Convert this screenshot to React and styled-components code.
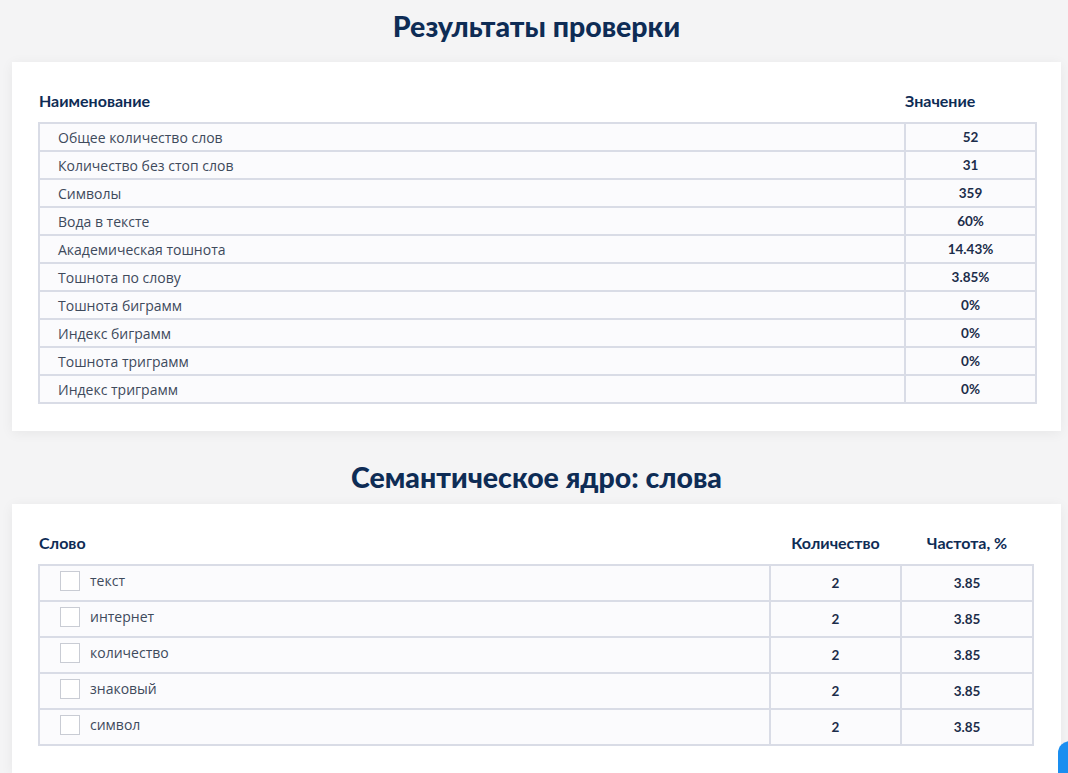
import React from 'react';
import styled, { createGlobalStyle } from 'styled-components';

const Global = createGlobalStyle`
  body { margin: 0; background: #f4f4f5; font-family: 'Open Sans', 'Noto Sans', sans-serif; overflow: hidden; }
`;

const stats = [
  ['Общее количество слов', '52'],
  ['Количество без стоп слов', '31'],
  ['Символы', '359'],
  ['Вода в тексте', '60%'],
  ['Академическая тошнота', '14.43%'],
  ['Тошнота по слову', '3.85%'],
  ['Тошнота биграмм', '0%'],
  ['Индекс биграмм', '0%'],
  ['Тошнота триграмм', '0%'],
  ['Индекс триграмм', '0%'],
];

const words = ['текст', 'интернет', 'количество', 'знаковый', 'символ'];

export default function App() {
  return (
    <Page>
      <Global />
      <Title $bottom={18}>Результаты проверки</Title>
      <Card>
        <Table $w={999}>
          <colgroup><col /><col style={{ width: 131 }} /></colgroup>
          <thead>
            <tr><Th>Наименование</Th><Th>Значение</Th></tr>
          </thead>
          <tbody>
            {stats.map(([n, v]) => (
              <tr key={n}><Td $h={28}>{n}</Td><Num $h={28}>{v}</Num></tr>
            ))}
          </tbody>
        </Table>
      </Card>
      <Title $top={28} $bottom={9}>Семантическое ядро: слова</Title>
      <Card>
        <Table $w={996}>
          <colgroup><col /><col style={{ width: 131 }} /><col style={{ width: 132 }} /></colgroup>
          <thead>
            <tr><Th>Слово</Th><Th $center>Количество</Th><Th $center>Частота, %</Th></tr>
          </thead>
          <tbody>
            {words.map(w => (
              <tr key={w}>
                <Td $h={36}><Word><Box />{w}</Word></Td>
                <Num $h={36}>2</Num>
                <Num $h={36}>3.85</Num>
              </tr>
            ))}
          </tbody>
        </Table>
      </Card>
      <Fab />
    </Page>
  );
}

const Page = styled.div`
  padding: 8px 7px 0 12px;
  position: relative;
  height: 773px;
  box-sizing: border-box;
`;

const Title = styled.h1`
  margin: ${p => p.$top || 0}px 0 ${p => p.$bottom || 0}px;
  text-align: center;
  font-family: Lato, 'Noto Sans', sans-serif;
  font-weight: 900;
  font-size: 28.5px;
  line-height: 36px;
  color: #0e2c55;
`;

const Card = styled.div`
  background: #fff;
  box-shadow: 0 2px 12px rgba(0,0,0,0.06);
  padding: 26px 24px 27px 26px;
`;

const Table = styled.table`
  width: ${p => p.$w}px;
  border-collapse: collapse;
  table-layout: fixed;
`;

const Th = styled.th`
  text-align: ${p => (p.$center ? 'center' : 'left')};
  font-family: Lato, 'Noto Sans', sans-serif;
  font-weight: 700;
  font-size: 16px;
  color: #0e2c55;
  padding: 0 0 10px;
  height: 24px;
`;

const Td = styled.td`
  height: ${p => p.$h}px;
  padding: 0 0 0 18px;
  border: 2px solid #d9dce6;
  background: #fbfbfd;
  font-size: 14px;
  color: #3e4a5c;
  box-sizing: border-box;
`;

const Num = styled(Td)`
  padding: 0;
  text-align: center;
  font-family: Lato, 'Noto Sans', sans-serif;
  font-weight: 700;
  font-size: 13.5px;
  color: #1c2d4a;
`;

const Word = styled.div`
  display: flex;
  align-items: center;
  gap: 10px;
  margin-top: -5px;
`;

const Box = styled.span`
  width: 18px;
  height: 18px;
  border: 1px solid #c9ccd4;
  background: #fff;
  margin-left: 2px;
`;

const Fab = styled.div`
  position: absolute;
  right: -30px;
  bottom: -20px;
  width: 40px;
  height: 52px;
  border-radius: 12px;
  background: #1a8ef0;
`;
